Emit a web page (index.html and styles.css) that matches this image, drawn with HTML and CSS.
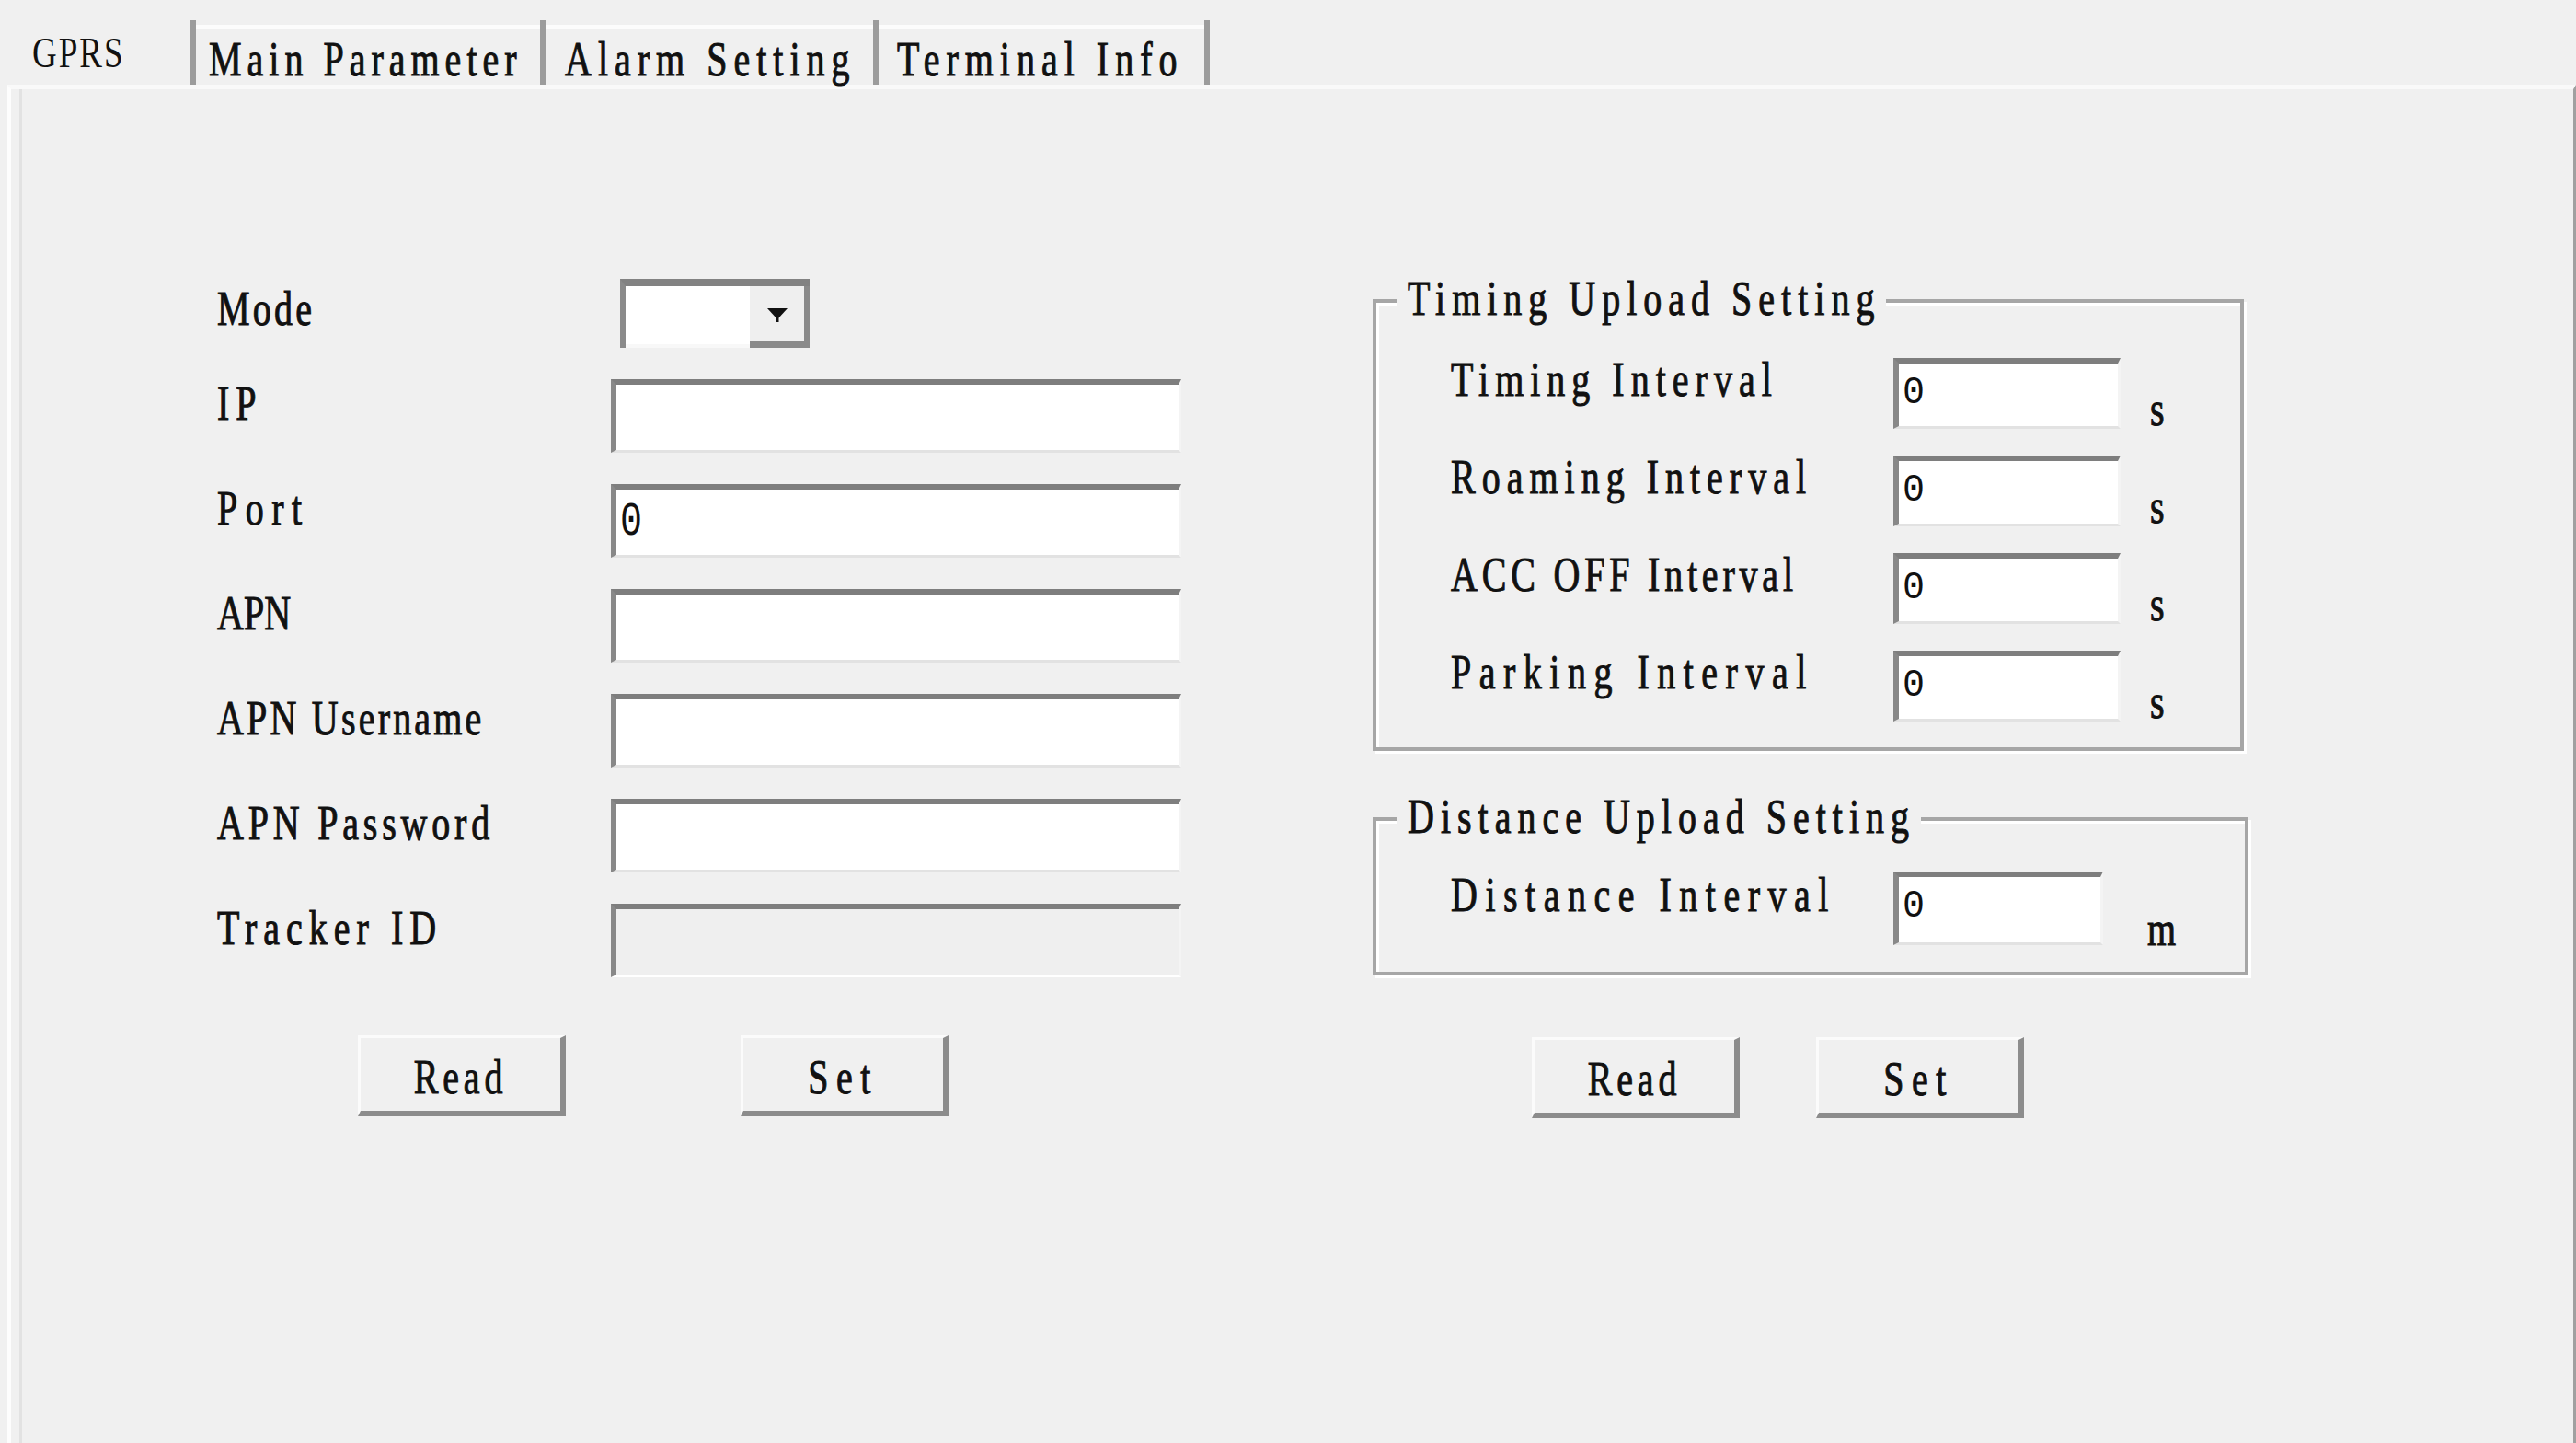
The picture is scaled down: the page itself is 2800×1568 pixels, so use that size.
FILE: index.html
```html
<!DOCTYPE html>
<html lang="en">
<head>
<meta charset="utf-8">
<title>GPRS</title>
<link rel="stylesheet" href="styles.css">
</head>
<body>
<div class="app">
  <div class="tabs">
    <div class="tab active"><span class="tx">GPRS</span></div>
    <div class="tab t1"><span class="tx">Main Parameter</span></div>
    <div class="tab t2"><span class="tx">Alarm Setting</span></div>
    <div class="tab t3"><span class="tx">Terminal Info</span></div>
  </div>
  <div class="page">
    <div class="col-left">
      <div class="form">
        <div class="lbl first"><span class="tx narrow">Mode</span></div>
        <div class="combo">
          <div class="combo-field"></div>
          <div class="combo-btn">
            <svg class="arrow" width="26" height="18" viewBox="0 0 26 18"><path d="M2 2 H24 L13 14 Z" fill="#111"/><rect x="11.5" y="12" width="3" height="5" fill="#111"/></svg>
          </div>
        </div>
        <div class="lbl"><span class="tx">IP</span></div>
        <div class="edit"></div>
        <div class="lbl"><span class="tx wide">Port</span></div>
        <div class="edit"><span class="val big">0</span></div>
        <div class="lbl"><span class="tx tight">APN</span></div>
        <div class="edit"></div>
        <div class="lbl"><span class="tx narrow">APN Username</span></div>
        <div class="edit"></div>
        <div class="lbl"><span class="tx mid">APN Password</span></div>
        <div class="edit"></div>
        <div class="lbl"><span class="tx">Tracker ID</span></div>
        <div class="edit disabled"></div>
      </div>
      <div class="btns btns-left">
        <div class="btn"><span class="tx mid">Read</span></div>
        <div class="btn"><span class="tx wide">Set</span></div>
      </div>
    </div>
    <div class="col-right">
      <div class="group timing">
        <div class="group-title"><span class="tx">Timing Upload Setting</span></div>
        <div class="ggrid">
          <div class="glbl"><span class="tx">Timing Interval</span></div>
          <div class="edit small"><span class="val">0</span></div>
          <div class="unit"><span class="tx">s</span></div>
          <div class="glbl"><span class="tx">Roaming Interval</span></div>
          <div class="edit small"><span class="val">0</span></div>
          <div class="unit"><span class="tx">s</span></div>
          <div class="glbl"><span class="tx mid">ACC OFF Interval</span></div>
          <div class="edit small"><span class="val">0</span></div>
          <div class="unit"><span class="tx">s</span></div>
          <div class="glbl"><span class="tx wide">Parking Interval</span></div>
          <div class="edit small"><span class="val">0</span></div>
          <div class="unit"><span class="tx">s</span></div>
        </div>
      </div>
      <div class="group distance">
        <div class="group-title"><span class="tx">Distance Upload Setting</span></div>
        <div class="ggrid dgrid">
          <div class="glbl dlbl"><span class="tx wide">Distance Interval</span></div>
          <div class="edit small dedit"><span class="val">0</span></div>
          <div class="unit dunit"><span class="tx">m</span></div>
        </div>
      </div>
      <div class="btns btns-right">
        <div class="btn"><span class="tx mid">Read</span></div>
        <div class="btn"><span class="tx wide">Set</span></div>
      </div>
    </div>
  </div>
</div>
</body>
</html>
```
FILE: styles.css
```css
html, body {
  margin: 0;
  padding: 0;
}

body {
  background: #f0f0f0;
  font-family: "Liberation Serif", "DejaVu Serif", serif;
  color: #111111;
}

.tx {
  display: inline-block;
  font-size: 40px;
  line-height: 45px;
  letter-spacing: 7px;
  white-space: pre;
  transform: scaleY(1.3);
  transform-origin: 0 0;
  -webkit-text-stroke: 0.8px #111111;
}

.tx.wide {
  letter-spacing: 8.5px;
}

.tx.mid {
  letter-spacing: 4.8px;
}

.tx.narrow {
  letter-spacing: 3.2px;
}

.tx.tight {
  letter-spacing: 0;
}

.app {
  width: 2800px;
  height: 1568px;
  display: flex;
  flex-direction: column;
  overflow: hidden;
}

/* ---------- tab strip ---------- */
.tabs {
  display: flex;
  height: 92px;
  box-sizing: border-box;
  padding-top: 22px;
}

.tab {
  box-sizing: border-box;
  padding-top: 13px;
  border-left: 6px solid #9c9c9c;
  background: linear-gradient(to bottom, #f0f0f0 5px, #fcfcfc 5px, #fcfcfc 10px, #f0f0f0 10px);
}

.tab.active {
  width: 207px;
  padding: 7px 0 0 35px;
  border-left: none;
  background: none;
}

.tab.active .tx {
  font-size: 37px;
  letter-spacing: 2px;
  transform: scaleY(1.25);
  -webkit-text-stroke: 0;
}

.tab.t1 {
  width: 380px;
  padding-left: 14px;
}

.tab.t1 .tx {
  letter-spacing: 6px;
}

.tab.t2 {
  width: 362px;
  padding-left: 21px;
}

.tab.t3 {
  width: 366px;
  padding-left: 20px;
  border-right: 6px solid #9c9c9c;
}

/* ---------- page ---------- */
.page {
  flex: 1;
  margin-left: 8px;
  border-top: 5px solid #f9f9f9;
  border-left: 4px solid #fdfdfd;
  border-right: 3px solid #a0a0a0;
  box-shadow: inset 9px 0 0 #f0f0f0, inset 12px 0 0 #e2e2e2;
  display: flex;
  align-items: flex-start;
  padding: 206px 0 0 224px;
}

.col-left {
  width: 1048px;
}

.form {
  display: grid;
  grid-template-columns: 428px 620px;
  grid-template-rows: 75px repeat(6, 80px);
  row-gap: 34px;
}

.lbl {
  align-self: start;
  height: 45px;
  margin-top: -3px;
}

.lbl.first {
  margin-top: 3px;
}

/* sunken edit box */
.edit {
  box-sizing: border-box;
  height: 80px;
  border-style: solid;
  border-width: 6px 3px 3px 6px;
  border-color: #7e7e7e #f4f4f4 #e2e2e2 #888888;
  background: #ffffff;
  padding: 6px 0 0 4px;
}

.edit.disabled {
  background: #efefef;
  border-bottom-color: #ffffff;
}

/* combo box */
.combo {
  margin-left: 10px;
  width: 206px;
  height: 75px;
  box-sizing: border-box;
  border-top: 8px solid #828282;
  border-left: 6px solid #8a8a8a;
  display: flex;
}

.combo-field {
  flex: 1;
  background: #ffffff;
  border-bottom: 4px solid #f8f8f8;
}

.combo-btn {
  width: 65px;
  box-sizing: border-box;
  background: #efefef;
  border-right: 6px solid #8a8a8a;
  border-bottom: 8px solid #8a8a8a;
  display: flex;
  align-items: center;
  justify-content: center;
}

.arrow {
  display: block;
  margin-top: 2px;
}

/* buttons */
.btns {
  display: flex;
}

.btns-left {
  margin-top: 63px;
  padding-left: 153px;
  gap: 190px;
}

.btns-right {
  margin-top: 67px;
  padding-left: 173px;
  gap: 83px;
}

.btn {
  width: 226px;
  height: 88px;
  box-sizing: border-box;
  border-style: solid;
  border-width: 3px 6px 6px 3px;
  border-color: #fbfbfb #8c8c8c #8c8c8c #fbfbfb;
  display: flex;
  align-items: center;
  justify-content: center;
}

.btn .tx {
  margin-top: -8px;
}

/* ---------- right column ---------- */
.col-right {
  margin-left: 208px;
  margin-top: 22px;
  width: 952px;
}

.group {
  position: relative;
  box-sizing: border-box;
  border: 4px solid #a6a6a6;
  box-shadow: 3px 3px 0 #ffffff, inset 3px 3px 0 #ffffff;
}

.group.timing {
  width: 947px;
  padding: 60px 0 28px 81px;
}

.group.distance {
  width: 952px;
  margin-top: 72px;
  padding: 55px 0 29px 81px;
}

.group-title {
  position: absolute;
  top: -34px;
  left: 22px;
  height: 45px;
  padding: 0 6px 0 12px;
  background: #f0f0f0;
}

.ggrid {
  display: grid;
  grid-template-columns: 481px 247px 90px;
  grid-auto-rows: 77px;
  row-gap: 29px;
}

.glbl {
  align-self: start;
  margin-top: -6px;
}

.edit.small {
  height: 77px;
  padding: 8px 0 0 4px;
}

.val {
  display: inline-block;
  font-family: "Liberation Mono", monospace;
  font-size: 40px;
  line-height: 45px;
  transform: scaleY(1.05);
  transform-origin: 0 0;
}

.val.big {
  transform: scaleY(1.3);
}

.unit {
  padding: 26px 0 0 32px;
}

.dgrid {
  grid-template-columns: 481px 228px 100px;
  grid-auto-rows: 80px;
}

.dlbl {
  margin-top: -4px;
}

.edit.dedit {
  height: 80px;
}

.unit.dunit {
  padding: 33px 0 0 48px;
}
```
